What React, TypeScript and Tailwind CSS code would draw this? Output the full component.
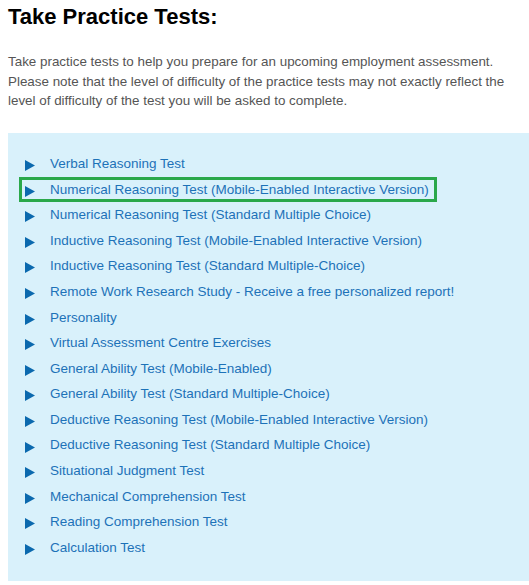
const tests = [
  "Verbal Reasoning Test",
  "Numerical Reasoning Test (Mobile-Enabled Interactive Version)",
  "Numerical Reasoning Test (Standard Multiple Choice)",
  "Inductive Reasoning Test (Mobile-Enabled Interactive Version)",
  "Inductive Reasoning Test (Standard Multiple-Choice)",
  "Remote Work Research Study - Receive a free personalized report!",
  "Personality",
  "Virtual Assessment Centre Exercises",
  "General Ability Test (Mobile-Enabled)",
  "General Ability Test (Standard Multiple-Choice)",
  "Deductive Reasoning Test (Mobile-Enabled Interactive Version)",
  "Deductive Reasoning Test (Standard Multiple Choice)",
  "Situational Judgment Test",
  "Mechanical Comprehension Test",
  "Reading Comprehension Test",
  "Calculation Test",
];

function Arrow() {
  return (
    <svg width="10" height="11" viewBox="0 0 10 11" className="mt-[3px] shrink-0">
      <polygon points="0,0 10,5.5 0,11" fill="#0b69ae" />
    </svg>
  );
}

export default function App() {
  return (
    <div className="min-h-[585px] bg-white pl-2 font-['Liberation_Sans',Arial,sans-serif] overflow-hidden">
      <h1 className="pt-[4px] text-[22px] font-bold leading-[1.2] text-black">Take Practice Tests:</h1>
      <p className="mt-[22px] text-[13.4px] leading-[19.5px] text-[#555]">
        Take practice tests to help you prepare for an upcoming employment assessment.
        <br />
        Please note that the level of difficulty of the practice tests may not exactly reflect the
        <br />
        level of difficulty of the test you will be asked to complete.
      </p>
      <div className="mt-[22px] w-[540px] bg-[#d9f1fb] pt-[18.4px] pb-[20px] pl-[11px]">
        <ul>
          {tests.map((t, i) => (
            <li
              key={t}
              className={
                i === 1
                  ? "flex h-[25.6px] w-fit items-center pl-[6px] pr-[8px] shadow-[inset_0_0_0_3px_#2aa84a]"
                  : "flex h-[25.6px] items-center pl-[6px]"
              }
            >
              <Arrow />
              <a href="#" className="ml-[15px] whitespace-nowrap text-[13.5px] text-[#1d72b8]">
                {t}
              </a>
            </li>
          ))}
        </ul>
      </div>
    </div>
  );
}
